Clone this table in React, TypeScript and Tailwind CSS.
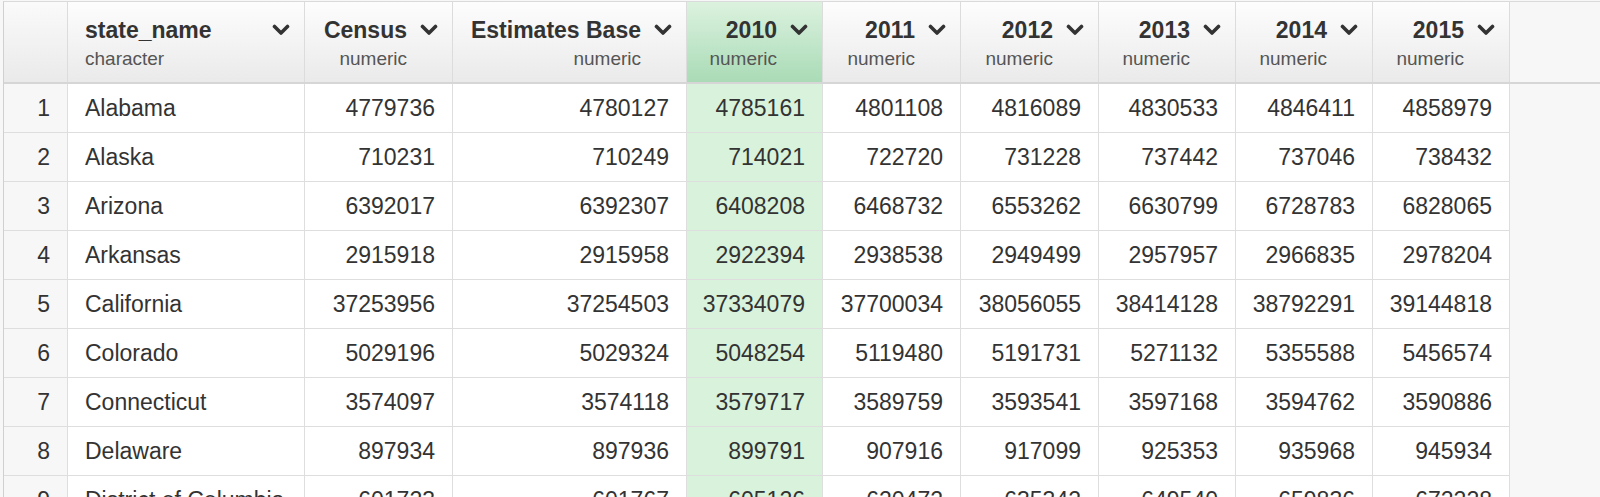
import React from "react";

type Col = { key: string; title: string; type: string; w: string; green?: boolean; char?: boolean };

const cols: Col[] = [
  { key: "name", title: "state_name", type: "character", w: "w-[237px]", char: true },
  { key: "census", title: "Census", type: "numeric", w: "w-[148px]" },
  { key: "base", title: "Estimates Base", type: "numeric", w: "w-[234px]" },
  { key: "y2010", title: "2010", type: "numeric", w: "w-[136px]", green: true },
  { key: "y2011", title: "2011", type: "numeric", w: "w-[138px]" },
  { key: "y2012", title: "2012", type: "numeric", w: "w-[138px]" },
  { key: "y2013", title: "2013", type: "numeric", w: "w-[137px]" },
  { key: "y2014", title: "2014", type: "numeric", w: "w-[137px]" },
  { key: "y2015", title: "2015", type: "numeric", w: "w-[137px]" },
];

const rows: (string | number)[][] = [
  ["Alabama", 4779736, 4780127, 4785161, 4801108, 4816089, 4830533, 4846411, 4858979],
  ["Alaska", 710231, 710249, 714021, 722720, 731228, 737442, 737046, 738432],
  ["Arizona", 6392017, 6392307, 6408208, 6468732, 6553262, 6630799, 6728783, 6828065],
  ["Arkansas", 2915918, 2915958, 2922394, 2938538, 2949499, 2957957, 2966835, 2978204],
  ["California", 37253956, 37254503, 37334079, 37700034, 38056055, 38414128, 38792291, 39144818],
  ["Colorado", 5029196, 5029324, 5048254, 5119480, 5191731, 5271132, 5355588, 5456574],
  ["Connecticut", 3574097, 3574118, 3579717, 3589759, 3593541, 3597168, 3594762, 3590886],
  ["Delaware", 897934, 897936, 899791, 907916, 917099, 925353, 935968, 945934],
  ["District of Columbia", 601723, 601767, 605126, 620472, 635342, 649540, 659836, 672228],
];

function Chevron() {
  return (
    <svg width="18" height="12" viewBox="0 0 18 12" className="shrink-0">
      <polyline points="2.5,2.5 9,9 15.5,2.5" fill="none" stroke="#333" strokeWidth="3.6" strokeLinecap="round" strokeLinejoin="round" />
    </svg>
  );
}

function HeaderCell({ c }: { c: Col }) {
  const bg = c.green
    ? "bg-gradient-to-b from-[#dcf2df] to-[#a9dbb6]"
    : "bg-gradient-to-b from-[#fdfdfd] to-[#eaeaea]";
  if (c.char) {
    return (
      <div className={`${c.w} shrink-0 h-full border-r border-[#dcdcdc] ${bg} pl-[17px] pr-[14px] pt-[14px] flex flex-col`}>
        <div className="flex items-center justify-between h-[28px]">
          <span className="text-[23px] font-bold text-[#333] leading-[28px]">{c.title}</span>
          <Chevron />
        </div>
        <div className="text-[19px] text-[#555] leading-[24px] mt-[3px]">{c.type}</div>
      </div>
    );
  }
  return (
    <div className={`${c.w} shrink-0 h-full border-r border-[#dcdcdc] ${bg} pr-[14px] pt-[14px] flex flex-col items-end`}>
      <div className="flex items-center gap-[13px] h-[28px]">
        <span className="text-[23px] font-bold text-[#333] leading-[28px] whitespace-nowrap">{c.title}</span>
        <Chevron />
      </div>
      <div className="text-[19px] text-[#555] leading-[24px] mt-[3px] pr-[31px]">{c.type}</div>
    </div>
  );
}

export default function App() {
  return (
    <div
      className="w-[1600px] h-[497px] overflow-hidden bg-[#f7f7f7] pt-[1px] pl-[3px]"
      style={{ fontFamily: '"Liberation Sans", Arial, sans-serif' }}
    >
      <div className="border-t border-[#dadada] border-l border-l-[#d0d0d0]">
        {/* header */}
        <div className="flex h-[82px] border-b-2 border-[#d6d6d6]">
          <div className="w-[64px] shrink-0 h-full border-r border-[#dcdcdc] bg-gradient-to-b from-[#fafafa] to-[#eaeaea]" />
          {cols.map((c) => (
            <HeaderCell key={c.key} c={c} />
          ))}
          <div className="flex-1 h-full bg-[#f7f7f7]" />
        </div>
        {/* body */}
        {rows.map((r, i) => (
          <div key={i} className="flex h-[49px]">
            <div className="w-[64px] shrink-0 h-full border-r border-b border-[#dedede] bg-[#f7f7f7] flex items-center justify-end pr-[17px] text-[23px] text-[#333]">
              {i + 1}
            </div>
            {cols.map((c, j) => (
              <div
                key={c.key}
                className={`${c.w} shrink-0 h-full border-r border-b border-[#dedede] flex items-center text-[23px] text-[#333] px-[17px] whitespace-nowrap overflow-hidden ${
                  c.char ? "justify-start" : "justify-end"
                } ${c.green ? "bg-[#d9f2dc]" : "bg-white"}`}
              >
                {r[j]}
              </div>
            ))}
          </div>
        ))}
      </div>
    </div>
  );
}
